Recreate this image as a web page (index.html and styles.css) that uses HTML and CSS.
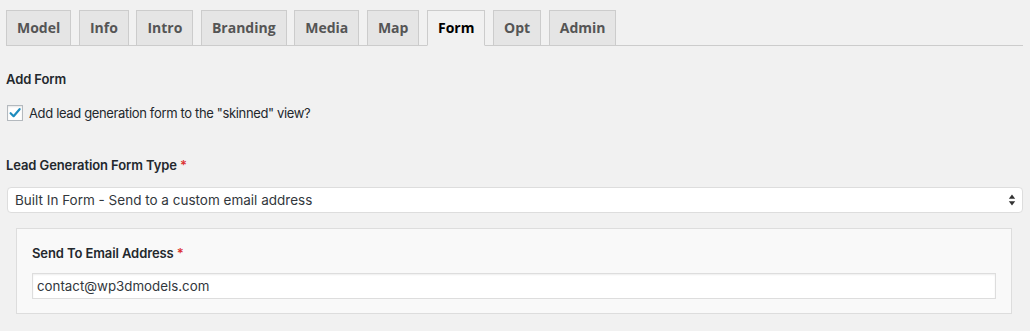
FILE: index.html
```html
<!DOCTYPE html>
<html>
<head>
<meta charset="utf-8">
<link rel="stylesheet" href="styles.css">
</head>
<body>
<div class="page">
  <nav class="tabs">
    <a class="tab">Model</a>
    <a class="tab">Info</a>
    <a class="tab">Intro</a>
    <a class="tab">Branding</a>
    <a class="tab">Media</a>
    <a class="tab">Map</a>
    <a class="tab active">Form</a>
    <a class="tab">Opt</a>
    <a class="tab">Admin</a>
  </nav>

  <div class="field">
    <div class="label">Add Form</div>
    <label class="check">
      <span class="box"><svg viewBox="0 0 16 16" width="16" height="16"><path d="M3.6 8.2 L6.6 11.2 L12.6 4.2" fill="none" stroke="#1e8cbe" stroke-width="2.2" stroke-linecap="round" stroke-linejoin="round"/></svg></span>
      <span>Add lead generation form to the "skinned" view?</span>
    </label>
  </div>

  <div class="field field-type">
    <div class="label">Lead Generation Form Type <span class="req">*</span></div>
    <div class="select">
      <span>Built In Form - Send to a custom email address</span>
      <svg class="arrows" viewBox="0 0 8 12" width="8" height="12"><path d="M4 0.5 L7.2 4.8 H0.8 Z M4 11.5 L7.2 7.2 H0.8 Z" fill="#333"/></svg>
    </div>
  </div>

  <div class="panel">
    <div class="label">Send To Email Address <span class="req">*</span></div>
    <div class="input">contact@wp3dmodels.com</div>
  </div>
</div>
</body>
</html>
```

FILE: styles.css
```css
html, body {
  margin: 0;
  padding: 0;
  background: #f1f1f1;
}
body {
  font-family: Inter, "Noto Sans", sans-serif;
  color: #23282d;
  font-size: 13px;
}
.page {
  padding: 10px 7px 0 6px;
}
.tabs {
  display: flex;
  gap: 7.6px;
  border-bottom: 1px solid #ccc;
  padding-left: 0;
}
.tab {
  font-family: "Open Sans", sans-serif;
  font-weight: 700;
  font-size: 14px;
  line-height: 24px;
  padding: 5px 10px;
  background: #e5e5e5;
  color: #555;
  border: 1px solid #ccc;
  margin-bottom: -1px;
}
.tab.active {
  background: #f1f1f1;
  color: #000;
  border-bottom-color: #f1f1f1;
}
.field {
  padding-top: 25px;
}
.label {
  font-weight: 600;
  font-size: 13px;
  line-height: 16px;
  letter-spacing: -0.1px;
}
.req {
  color: #dc3232;
}
.check {
  display: flex;
  align-items: center;
  gap: 6px;
  margin-top: 18px;
  margin-left: 1px;
  letter-spacing: -0.35px;
}
.box {
  width: 14px;
  height: 14px;
  border: 1px solid #b4b9be;
  background: #fff;
  box-shadow: inset 0 1px 2px rgba(0,0,0,.1);
  display: flex;
  align-items: center;
  justify-content: center;
}
.box svg {
  flex: none;
}
.field-type {
  padding-top: 36px;
}
.select {
  margin: 14px 0 0 1px;
  height: 24px;
  background: #fff;
  border: 1px solid #ddd;
  border-radius: 4px;
  display: flex;
  align-items: center;
  justify-content: space-between;
  padding: 0 8px 0 7px;
  font-size: 13.5px;
  color: #32373c;
}
.arrows {
  margin-right: -2px;
}
.panel {
  margin: 15px 11px 0 10px;
  background: #f9f9f9;
  border: 1px solid #ddd;
  padding: 16px 15px 14px 15px;
}
.input {
  margin-top: 12px;
  height: 24px;
  background: #fff;
  border: 1px solid #ddd;
  box-shadow: inset 0 1px 2px rgba(0,0,0,.07);
  display: flex;
  align-items: center;
  padding: 0 4px;
  font-size: 13.3px;
  color: #32373c;
}
```
